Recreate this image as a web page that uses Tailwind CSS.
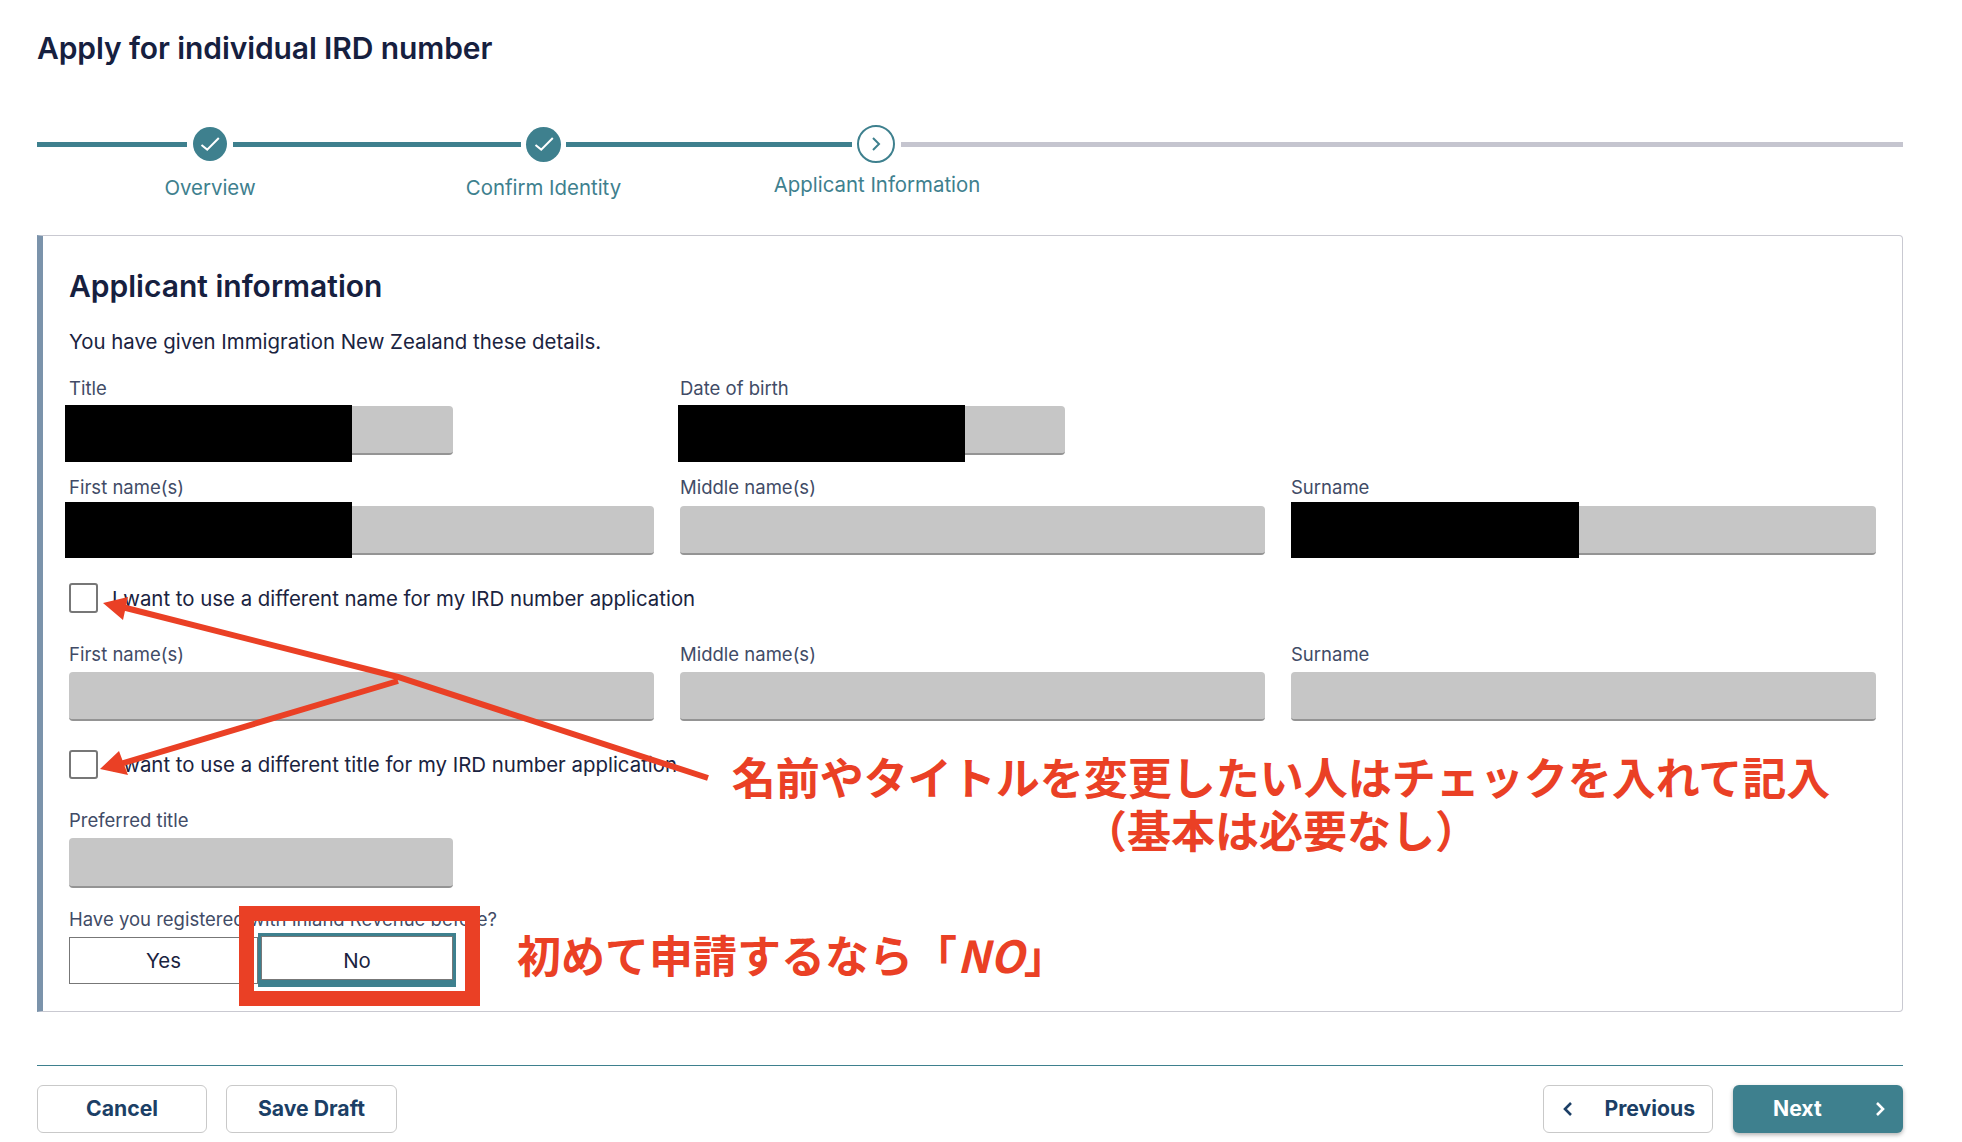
<!DOCTYPE html>
<html lang="ja">

<head>
    <meta charset="UTF-8">
    <title>Apply for individual IRD number</title>
    <script src="https://cdn.jsdelivr.net/npm/@tailwindcss/browser@4"></script>
</head>

<body class="bg-white relative w-[1962px] h-[1142px] overflow-hidden font-['Inter','Liberation_Sans',sans-serif] text-[#1a2340]">
    <main class="w-[1866px] ml-[37px]">
        <h1 class="pt-[28px] h-[125px] text-[30px] leading-[40px] font-semibold tracking-[-0.1px] text-[#16203f]">Apply for individual IRD number</h1>

        <!-- stepper -->
        <div class="flex items-center h-[38px]">
            <div class="w-[150px] h-[5px] bg-[#3e808e]"></div>
            <div class="ml-[6px] mr-[6px] w-[34px] h-[34px] rounded-full bg-[#3e808e] flex items-center justify-center">
                <svg class="w-[20px] h-[20px]" viewBox="0 0 20 20" fill="none" stroke="white" stroke-width="2"><path d="M1.500 11L7.200 15.600L18.800 4"/></svg>
            </div>
            <div class="w-[288px] h-[5px] bg-[#3e808e]"></div>
            <div class="ml-[5px] mr-[5px] w-[35px] h-[35px] rounded-full bg-[#3e808e] flex items-center justify-center">
                <svg class="w-[20px] h-[20px]" viewBox="0 0 20 20" fill="none" stroke="white" stroke-width="2"><path d="M1.500 11L7.200 15.600L18.800 4"/></svg>
            </div>
            <div class="w-[286px] h-[5px] bg-[#3e808e]"></div>
            <div class="ml-[5px] mr-[6px] w-[38px] h-[38px] rounded-full border-2 border-[#3e808e] flex items-center justify-center">
                <svg class="w-[14px] h-[14px]" viewBox="0 0 14 14" fill="none" stroke="#3e808e" stroke-width="2"><path d="M4 1l6 6-6 6"/></svg>
            </div>
            <div class="flex-1 h-[5px] bg-[#c5c5cf]"></div>
        </div>
        <div class="flex items-start text-[20.400px] leading-[28px] text-[#3e808e] h-[72px]">
            <div class="w-[346px] text-center mt-[11px]">Overview</div>
            <div class="w-[321px] text-center mt-[11px]">Confirm Identity</div>
            <div class="w-[346px] text-center mt-[8px]">Applicant Information</div>
        </div>

        <!-- card -->
        <section class="h-[777px] border border-[#c9c9d1] border-l-[6px] border-l-[#7b93ab] rounded-r-[4px] pl-[26px] pr-[26px]">
            <h2 class="pt-[30px] text-[30px] leading-[40px] font-semibold text-[#16203f]">Applicant information</h2>
            <p class="mt-[22px] text-[20.400px] leading-[28px]">You have given Immigration New Zealand these details.</p>

            <div class="mt-[21px] grid grid-cols-3 gap-x-[26px]">
                <div>
                    <label class="block mb-[7px] text-[18.500px] leading-[22px] text-[#414b66]">Title</label>
                    <div class="w-[384px] h-[49px] rounded-[4px] bg-[#c6c6c6] border-b-2 border-[#949494]"></div>
                </div>
                <div>
                    <label class="block mb-[7px] text-[18.500px] leading-[22px] text-[#414b66]">Date of birth</label>
                    <div class="w-[385px] h-[49px] rounded-[4px] bg-[#c6c6c6] border-b-2 border-[#949494]"></div>
                </div>
            </div>

            <div class="mt-[21px] grid grid-cols-3 gap-x-[26px]">
                <div>
                    <label class="block mb-[8px] text-[18.500px] leading-[22px] text-[#414b66]">First name(s)</label>
                    <div class="h-[49px] rounded-[4px] bg-[#c6c6c6] border-b-2 border-[#949494]"></div>
                </div>
                <div>
                    <label class="block mb-[8px] text-[18.500px] leading-[22px] text-[#414b66]">Middle name(s)</label>
                    <div class="h-[49px] rounded-[4px] bg-[#c6c6c6] border-b-2 border-[#949494]"></div>
                </div>
                <div>
                    <label class="block mb-[8px] text-[18.500px] leading-[22px] text-[#414b66]">Surname</label>
                    <div class="h-[49px] rounded-[4px] bg-[#c6c6c6] border-b-2 border-[#949494]"></div>
                </div>
            </div>

            <div class="mt-[28px] flex items-center h-[30px]">
                <div class="w-[29px] h-[30px] rounded-[3px] border-2 border-[#777777] bg-white"></div>
                <span class="ml-[14px] pt-[2px] text-[20.400px] leading-[28px]">I want to use a different name for my IRD number application</span>
            </div>

            <div class="mt-[30px] grid grid-cols-3 gap-x-[26px]">
                <div>
                    <label class="block mb-[7px] text-[18.500px] leading-[22px] text-[#414b66]">First name(s)</label>
                    <div class="h-[49px] rounded-[4px] bg-[#c6c6c6] border-b-2 border-[#949494]"></div>
                </div>
                <div>
                    <label class="block mb-[7px] text-[18.500px] leading-[22px] text-[#414b66]">Middle name(s)</label>
                    <div class="h-[49px] rounded-[4px] bg-[#c6c6c6] border-b-2 border-[#949494]"></div>
                </div>
                <div>
                    <label class="block mb-[7px] text-[18.500px] leading-[22px] text-[#414b66]">Surname</label>
                    <div class="h-[49px] rounded-[4px] bg-[#c6c6c6] border-b-2 border-[#949494]"></div>
                </div>
            </div>

            <div class="mt-[29px] flex items-center h-[29px]">
                <div class="w-[29px] h-[29px] rounded-[3px] border-2 border-[#777777] bg-white"></div>
                <span class="ml-[14px] pt-[1px] text-[20.400px] leading-[28px]">I want to use a different title for my IRD number application</span>
            </div>

            <div class="mt-[30px]">
                <label class="block mb-[7px] text-[18.500px] leading-[22px] text-[#414b66]">Preferred title</label>
                <div class="w-[384px] h-[50px] rounded-[4px] bg-[#c6c6c6] border-b-2 border-[#949494]"></div>
            </div>

            <label class="block mt-[20px] mb-[7px] text-[18.500px] leading-[22px] text-[#414b66]">Have you registered with Inland Revenue before?</label>
            <div class="flex items-start text-[20.400px]">
                <button class="w-[189px] h-[47px] pt-[2px] border border-[#777777] bg-white">Yes</button>
                <div class="w-[198px] h-[54px] -mt-[4px] border-[3px] border-b-[7px] border-[#3e808e]">
                    <button class="w-full h-full pt-[7px] border border-[#777777] bg-white">No</button>
                </div>
            </div>
        </section>

        <!-- footer buttons -->
        <div class="mt-[53px] border-t border-[#3e808e] pt-[19px] flex justify-between text-[21.200px] font-bold text-[#1c3f66]">
            <div class="flex gap-[19px]">
                <button class="w-[170px] h-[48px] rounded-[6px] border border-[#c9c9c9] bg-white">Cancel</button>
                <button class="w-[171px] h-[48px] rounded-[6px] border border-[#c9c9c9] bg-white">Save Draft</button>
            </div>
            <div class="flex gap-[20px]">
                <button class="w-[170px] h-[48px] rounded-[6px] border border-[#c9c9c9] bg-white flex items-center justify-between pl-[17px] pr-[17px]">
                    <svg class="w-[14px] h-[18px]" viewBox="0 0 14 18" fill="none" stroke="#1c3f66" stroke-width="2.600"><path d="M10 3l-6 6 6 6"/></svg>
                    <span>Previous</span>
                </button>
                <button class="w-[170px] h-[48px] rounded-[6px] bg-[#3e808e] text-white shadow-[0_2px_4px_rgba(0,0,0,0.3)] flex items-center justify-between pl-[40px] pr-[16px]">
                    <span>Next</span>
                    <svg class="w-[14px] h-[18px]" viewBox="0 0 14 18" fill="none" stroke="white" stroke-width="2.600"><path d="M4 3l6 6-6 6"/></svg>
                </button>
            </div>
        </div>
    </main>

    <!-- redaction bars over the fields -->
    <div class="absolute left-[65px] top-[405px] w-[287px] h-[57px] bg-black"></div>
    <div class="absolute left-[678px] top-[405px] w-[287px] h-[57px] bg-black"></div>
    <div class="absolute left-[65px] top-[502px] w-[287px] h-[56px] bg-black"></div>
    <div class="absolute left-[1291px] top-[502px] w-[288px] h-[56px] bg-black"></div>

    <!-- annotations -->
    <svg class="absolute left-0 top-0 w-[1962px] h-[1142px]" viewBox="0 0 1962 1142" fill="none">
        <path d="M122 607L398 677L708 778M398 681L120 764" stroke="#ea4025" stroke-width="6"/>
        <path d="M103 603L128 597L123 620Z M100 769L119 751L128 775Z" fill="#ea4025"/>
    </svg>
    <div class="absolute left-[239px] top-[906px] w-[241px] h-[100px] border-[15px] border-[#ea4025]"></div>
    <div class="absolute left-[681px] top-[750px] w-[1200px] text-center text-[44px] leading-[53px] font-bold text-[#ea4025] font-['Noto_Sans_CJK_JP',sans-serif]">
        <p class="whitespace-nowrap">名前やタイトルを変更したい人はチェックを入れて記入</p>
        <p class="whitespace-nowrap">（基本は必要なし）</p>
    </div>
    <div class="absolute left-[517px] top-[925px] whitespace-nowrap text-[44px] leading-[58px] font-bold text-[#ea4025] font-['Noto_Sans_CJK_JP',sans-serif]">初めて申請するなら「<em class="italic">NO</em>」</div>
</body>

</html>
